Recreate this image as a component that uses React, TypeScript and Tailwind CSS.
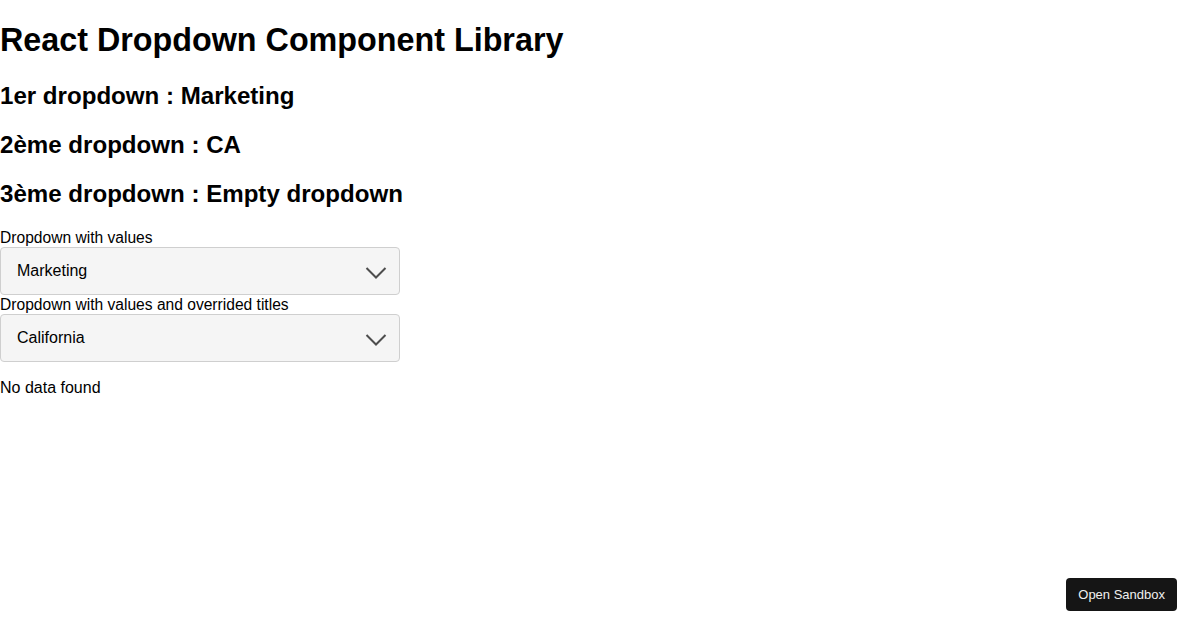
import { ReactNode } from "react";

function Chevron() {
  return (
    <svg width="22" height="14" viewBox="0 0 22 14" fill="none" className="mt-[3px] shrink-0">
      <path d="M1.5 2 L11 11.5 L20.5 2" stroke="#4d4d4d" strokeWidth="2" />
    </svg>
  );
}

function Dropdown({ label, value }: { label: ReactNode; value: string }) {
  return (
    <div>
      <div className="text-[15.6px] leading-[19px]">{label}</div>
      <div className="flex h-12 w-[400px] items-center justify-between rounded border border-[#cfcfcf] bg-[#f5f5f5] pl-4 pr-[12px]">
        <span className="text-base">{value}</span>
        <Chevron />
      </div>
    </div>
  );
}

export default function App() {
  return (
    <div className="relative min-h-[630px] bg-white font-['Liberation_Sans',Arial,sans-serif] text-black">
      <h1 className="pt-[22px] text-[32.3px] font-bold leading-[37px]">React Dropdown Component Library</h1>
      <h2 className="mt-[23px] text-[24.1px] font-bold leading-[28px]">1er dropdown : Marketing</h2>
      <h2 className="mt-[21px] text-[24.1px] font-bold leading-[28px]">2ème dropdown : CA</h2>
      <h2 className="mt-[21px] text-[24.1px] font-bold leading-[28px]">3ème dropdown : Empty dropdown</h2>

      <div className="mt-[20px]">
        <Dropdown label="Dropdown with values" value="Marketing" />
        <Dropdown label="Dropdown with values and overrided titles" value="California" />
        <p className="mt-[17px] text-base leading-[18px]">No data found</p>
      </div>

      <button className="absolute right-[23px] top-[578px] h-[33px] rounded bg-[#151515] px-[12px] text-[13px] text-[#f0f0f0]">
        Open Sandbox
      </button>
    </div>
  );
}
